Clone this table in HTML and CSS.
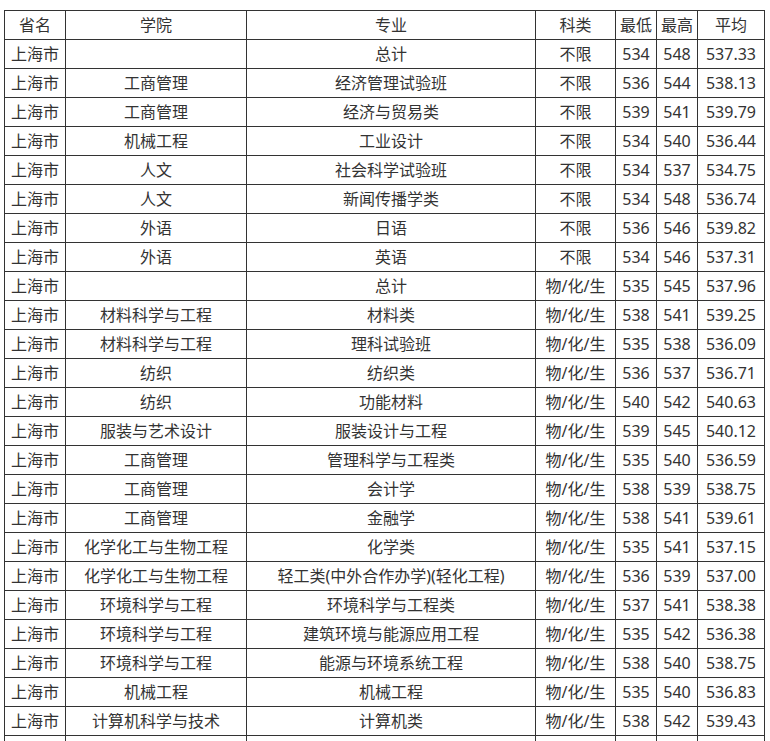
FILE: index.html
```html
<!DOCTYPE html>
<html lang="zh-CN">
<head>
<meta charset="utf-8">
<title>录取分数</title>
<link rel="stylesheet" href="styles.css">
</head>
<body>
<table class="score-table">
  <colgroup>
    <col class="c-prov"><col class="c-college"><col class="c-major"><col class="c-type"><col class="c-min"><col class="c-max"><col class="c-avg">
  </colgroup>
  <thead>
    <tr><th>省名</th><th>学院</th><th>专业</th><th>科类</th><th>最低</th><th>最高</th><th>平均</th></tr>
  </thead>
  <tbody>
    <tr><td>上海市</td><td></td><td>总计</td><td>不限</td><td>534</td><td>548</td><td>537.33</td></tr>
    <tr><td>上海市</td><td>工商管理</td><td>经济管理试验班</td><td>不限</td><td>536</td><td>544</td><td>538.13</td></tr>
    <tr><td>上海市</td><td>工商管理</td><td>经济与贸易类</td><td>不限</td><td>539</td><td>541</td><td>539.79</td></tr>
    <tr><td>上海市</td><td>机械工程</td><td>工业设计</td><td>不限</td><td>534</td><td>540</td><td>536.44</td></tr>
    <tr><td>上海市</td><td>人文</td><td>社会科学试验班</td><td>不限</td><td>534</td><td>537</td><td>534.75</td></tr>
    <tr><td>上海市</td><td>人文</td><td>新闻传播学类</td><td>不限</td><td>534</td><td>548</td><td>536.74</td></tr>
    <tr><td>上海市</td><td>外语</td><td>日语</td><td>不限</td><td>536</td><td>546</td><td>539.82</td></tr>
    <tr><td>上海市</td><td>外语</td><td>英语</td><td>不限</td><td>534</td><td>546</td><td>537.31</td></tr>
    <tr><td>上海市</td><td></td><td>总计</td><td>物/化/生</td><td>535</td><td>545</td><td>537.96</td></tr>
    <tr><td>上海市</td><td>材料科学与工程</td><td>材料类</td><td>物/化/生</td><td>538</td><td>541</td><td>539.25</td></tr>
    <tr><td>上海市</td><td>材料科学与工程</td><td>理科试验班</td><td>物/化/生</td><td>535</td><td>538</td><td>536.09</td></tr>
    <tr><td>上海市</td><td>纺织</td><td>纺织类</td><td>物/化/生</td><td>536</td><td>537</td><td>536.71</td></tr>
    <tr><td>上海市</td><td>纺织</td><td>功能材料</td><td>物/化/生</td><td>540</td><td>542</td><td>540.63</td></tr>
    <tr><td>上海市</td><td>服装与艺术设计</td><td>服装设计与工程</td><td>物/化/生</td><td>539</td><td>545</td><td>540.12</td></tr>
    <tr><td>上海市</td><td>工商管理</td><td>管理科学与工程类</td><td>物/化/生</td><td>535</td><td>540</td><td>536.59</td></tr>
    <tr><td>上海市</td><td>工商管理</td><td>会计学</td><td>物/化/生</td><td>538</td><td>539</td><td>538.75</td></tr>
    <tr><td>上海市</td><td>工商管理</td><td>金融学</td><td>物/化/生</td><td>538</td><td>541</td><td>539.61</td></tr>
    <tr><td>上海市</td><td>化学化工与生物工程</td><td>化学类</td><td>物/化/生</td><td>535</td><td>541</td><td>537.15</td></tr>
    <tr><td>上海市</td><td>化学化工与生物工程</td><td>轻工类(中外合作办学)(轻化工程)</td><td>物/化/生</td><td>536</td><td>539</td><td>537.00</td></tr>
    <tr><td>上海市</td><td>环境科学与工程</td><td>环境科学与工程类</td><td>物/化/生</td><td>537</td><td>541</td><td>538.38</td></tr>
    <tr><td>上海市</td><td>环境科学与工程</td><td>建筑环境与能源应用工程</td><td>物/化/生</td><td>535</td><td>542</td><td>536.38</td></tr>
    <tr><td>上海市</td><td>环境科学与工程</td><td>能源与环境系统工程</td><td>物/化/生</td><td>538</td><td>540</td><td>538.75</td></tr>
    <tr><td>上海市</td><td>机械工程</td><td>机械工程</td><td>物/化/生</td><td>535</td><td>540</td><td>536.83</td></tr>
    <tr><td>上海市</td><td>计算机科学与技术</td><td>计算机类</td><td>物/化/生</td><td>538</td><td>542</td><td>539.43</td></tr>
    <tr><td></td><td></td><td></td><td></td><td></td><td></td><td></td></tr>
  </tbody>
</table>
</body>
</html>
```

FILE: styles.css
```css
html, body {
  margin: 0;
  padding: 0;
  background: #ffffff;
}

body {
  font-family: "Noto Sans", "Noto Sans CJK SC", sans-serif;
  font-size: 16px;
  color: #333333;
}

.score-table {
  margin: 10px 0 0 4px;
  border-collapse: collapse;
  table-layout: fixed;
  width: 760px;
}

.score-table th,
.score-table td {
  border: 1px solid #333333;
  height: 28px;
  padding: 0;
  line-height: 28px;
  text-align: center;
  font-weight: normal;
  white-space: nowrap;
  overflow: hidden;
}

.c-prov { width: 61px; }
.c-college { width: 181px; }
.c-major { width: 289px; }
.c-type { width: 80px; }
.c-min { width: 41px; }
.c-max { width: 41px; }
.c-avg { width: 67px; }
```
